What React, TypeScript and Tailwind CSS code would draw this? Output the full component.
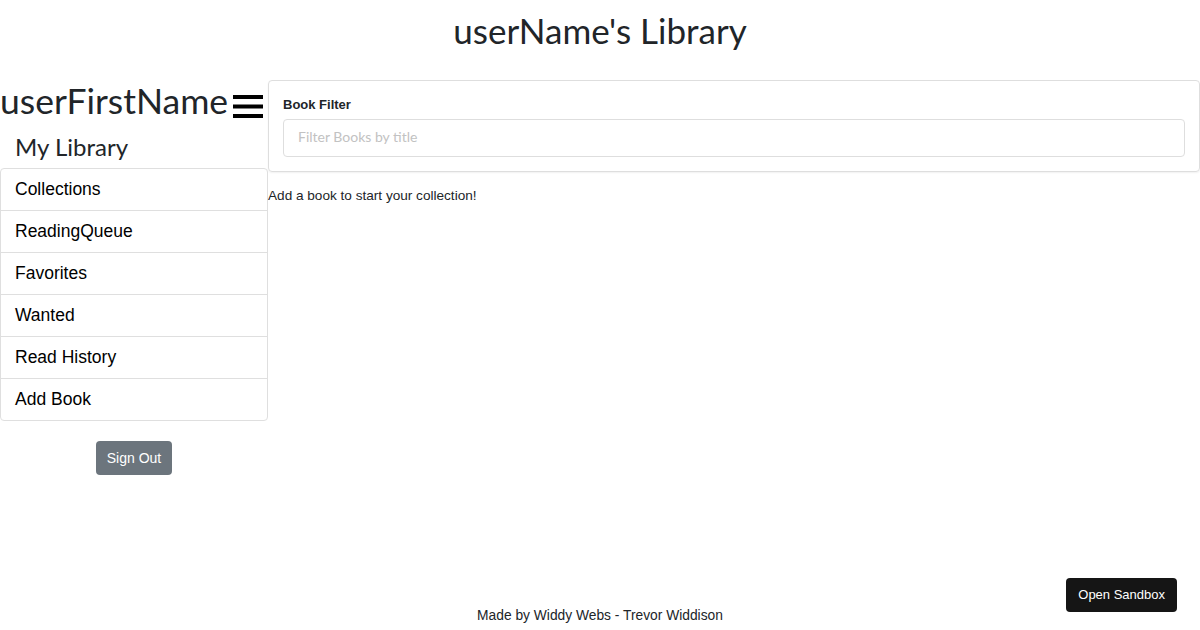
const navItems = ["Collections", "ReadingQueue", "Favorites", "Wanted", "Read History", "Add Book"];

function Hamburger() {
    return (
        <svg width="30" height="23" viewBox="0 0 30 23" className="mb-[6px] ml-[5px]">
            <rect x="0" y="0" width="30" height="4" fill="#000" />
            <rect x="0" y="9.5" width="30" height="4" fill="#000" />
            <rect x="0" y="19" width="30" height="4" fill="#000" />
        </svg>
    );
}

export default function App() {
    return (
        <div className="relative h-[630px] w-[1200px] bg-white font-['Liberation_Sans',Arial,sans-serif] text-black">
            <h1 className="pt-[7px] text-center font-['Lato',sans-serif] text-[35px] leading-[46px] text-[#212529]">
                userName's Library
            </h1>
            <div className="mt-[27px] flex items-start">
                <aside className="w-[268px] shrink-0">
                    <div className="flex h-[44px] items-end font-['Lato',sans-serif] text-[35.5px] leading-[42px] text-[#212529]">
                        <span className="pb-[2px]">userFirstName</span>
                        <Hamburger />
                    </div>
                    <h2 className="pl-[15px] pt-[1px] font-['Lato',sans-serif] text-[24px] leading-[43px] text-[#212529]">My Library</h2>
                    <ul className="rounded-[4px] border border-[#dfdfdf]">
                        {navItems.map((item, i) => (
                            <li
                                key={item}
                                className={`flex h-[41px] items-center px-[14px] text-[17.5px] ${i > 0 ? "h-[42px] border-t border-[#dfdfdf]" : ""}`}
                            >
                                {item}
                            </li>
                        ))}
                    </ul>
                    <div className="mt-[20px] flex justify-center">
                        <button className="h-[34px] rounded-[4px] bg-[#6c757d] px-[11px] text-[14px] text-white">Sign Out</button>
                    </div>
                </aside>
                <main className="flex-1">
                    <div className="rounded-[4px] border border-[#dedede] px-[14px] pb-[14px] pt-[16px] shadow-[0_1px_2px_rgba(0,0,0,0.06)]">
                        <label className="block text-[13px] font-bold leading-[16px] text-[#212529]">Book Filter</label>
                        <input
                            placeholder="Filter Books by title"
                            className="mt-[6px] h-[38px] w-full rounded-[4px] border border-[#dedede] px-[14px] pb-[3px] font-['Lato',sans-serif] text-[14px] outline-none placeholder:text-[#c2c2c2]"
                        />
                    </div>
                    <p className="mt-[15px] text-[13.6px] leading-[18px] text-[#212529]">Add a book to start your collection!</p>
                </main>
            </div>
            <footer className="absolute bottom-[3px] left-0 right-0 text-center text-[13.8px] text-[#212529]">
                Made by Widdy Webs - Trevor Widdison
            </footer>
            <button className="absolute bottom-[18px] right-[23px] h-[34px] rounded-[4px] bg-[#151515] px-[12px] text-[13px] text-white">
                Open Sandbox
            </button>
        </div>
    );
}
